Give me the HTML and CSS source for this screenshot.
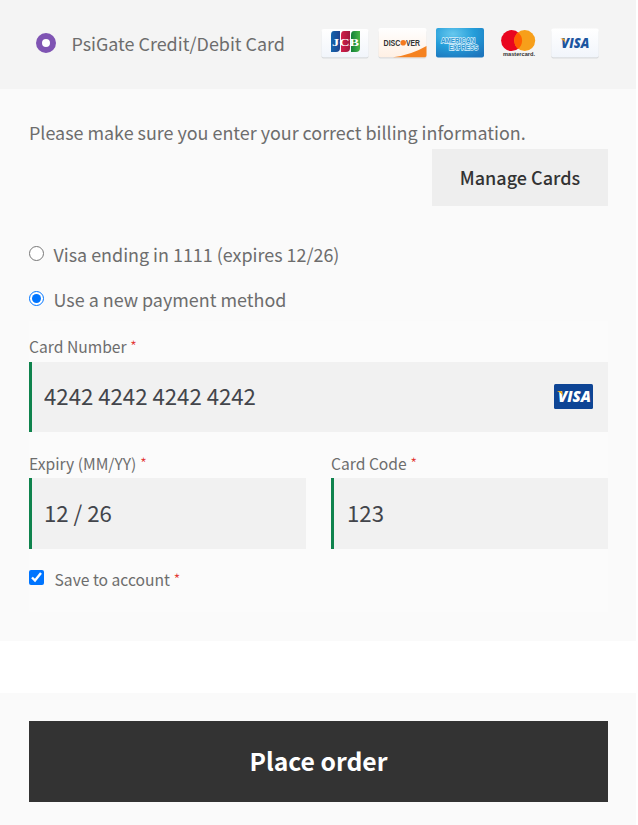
FILE: index.html
```html
<!DOCTYPE html>
<html lang="en">
<head>
<meta charset="utf-8">
<title>Checkout</title>
<link rel="stylesheet" href="styles.css">
</head>
<body>
<form class="checkout">
	<div class="method">
		<input type="radio" class="method-radio" name="gateway" id="psigate" checked>
		<label for="psigate" class="method-name">PsiGate Credit/Debit Card</label>
		<div class="cards">
			<svg width="48" height="31" viewBox="0 0 48 31">
				<defs>
					<linearGradient id="paper" x1="0" y1="0" x2="0" y2="1"><stop offset="0" stop-color="#fff"/><stop offset="1" stop-color="#f1f5fb"/></linearGradient>
					<linearGradient id="jb" x1="0" x2="1"><stop offset="0" stop-color="#1465ad"/><stop offset="1" stop-color="#1e448f"/></linearGradient>
					<linearGradient id="jr" x1="0" x2="1"><stop offset="0" stop-color="#d3204a"/><stop offset="1" stop-color="#9f173e"/></linearGradient>
					<linearGradient id="jg" x1="0" x2="1"><stop offset="0" stop-color="#128039"/><stop offset="1" stop-color="#48b547"/></linearGradient>
				</defs>
				<rect x=".5" y="2" width="47" height="28.5" rx="2" fill="#d9dbdd"/>
				<rect x=".5" y="1" width="47" height="28.3" rx="2" fill="url(#paper)"/>
				<path d="M13 3h6v17q0 4-4 4H10V7q0-4 3-4z" fill="url(#jb)"/>
				<path d="M23 3h6v17q0 4-4 4h-5V7q0-4 3-4z" fill="url(#jr)"/>
				<path d="M33 3h6v17q0 4-4 4h-5V7q0-4 3-4z" fill="url(#jg)"/>
				<text x="11" y="18" class="jcb" textLength="27" lengthAdjust="spacingAndGlyphs">JCB</text>
			</svg>
			<svg width="49" height="31" viewBox="0 0 49 31">
				<defs><linearGradient id="peach" x1="0" y1="0" x2="0" y2="1"><stop offset="0" stop-color="#fff"/><stop offset="1" stop-color="#fff0e4"/></linearGradient></defs>
				<rect x=".5" y="2" width="48" height="28.500" rx="2" fill="#d9dbdd"/>
				<rect x=".5" y="0" width="48" height="29.300" rx="2" fill="url(#peach)"/>
				<path d="M48.500 18v9.500q0 1.800-2 1.800H15Q33 27 48.500 18z" fill="#f58220"/>
				<text x="5.500" y="18" class="discover" textLength="17" lengthAdjust="spacingAndGlyphs">DISC</text>
				<circle cx="25.200" cy="14.800" r="2.800" fill="#f47a20"/>
				<text x="28" y="18" class="discover" textLength="14" lengthAdjust="spacingAndGlyphs">VER</text>
			</svg>
			<svg width="48" height="31" viewBox="0 0 48 31">
				<defs><radialGradient id="amex" cx=".35" cy=".2" r=".9"><stop offset="0" stop-color="#66c8ee"/><stop offset=".5" stop-color="#249dd9"/><stop offset="1" stop-color="#1d76bd"/></radialGradient></defs>
				<rect x="0" y="0" width="48" height="29.500" rx="2" fill="url(#amex)"/>
				<text x="5" y="15" class="amex" textLength="34" lengthAdjust="spacingAndGlyphs">AMERICAN</text>
				<text x="13" y="22" class="amex" textLength="29" lengthAdjust="spacingAndGlyphs">EXPRESS</text>
			</svg>
			<svg width="48" height="31" viewBox="0 0 48 31">
				<circle cx="17.600" cy="12.600" r="10.500" fill="#e9061f"/>
				<circle cx="30.700" cy="12.600" r="10.500" fill="#f79f1a"/>
				<path d="M24.150 4.400a10.500 10.500 0 0 1 0 16.400a10.500 10.500 0 0 1 0-16.400z" fill="#ff5f00"/>
				<text x="9" y="28.200" class="mc" textLength="32" lengthAdjust="spacingAndGlyphs">mastercard.</text>
			</svg>
			<svg width="48" height="31" viewBox="0 0 48 31">
				<rect x=".3" y="2" width="47.400" height="28.500" rx="2" fill="#d9dbdd"/>
				<rect x=".3" y=".5" width="47.400" height="28.800" rx="2" fill="url(#paper)"/>
				<text x="10.300" y="20" class="visa" textLength="28" lengthAdjust="spacingAndGlyphs">VISA</text>
				<path d="M9.300 10.500h3q1.200 0 1.500 1.200l.6 3q-1.600-2.700-5.100-4.200z" fill="#f0a11e"/>
			</svg>
		</div>
	</div>

	<div class="payment-box">
		<p class="note">Please make sure you enter your correct billing information.</p>
		<div class="manage"><a class="button">Manage Cards</a></div>
		<div class="saved first">
			<input type="radio" name="token" id="visa1111">
			<label for="visa1111">Visa ending in 1111 (expires 12/26)</label>
		</div>
		<div class="saved">
			<input type="radio" name="token" id="newcard" checked>
			<label for="newcard">Use a new payment method</label>
		</div>

		<div class="card-form">
			<div class="field">
				<label for="number">Card Number <span class="required">*</span></label>
				<div class="number-box">
					<input type="text" id="number" class="text" value="4242 4242 4242 4242">
					<svg class="brand" width="39" height="25" viewBox="0 0 39 25">
						<rect width="39" height="25" rx="1.500" fill="#0e4595"/>
						<text x="4" y="17.600" class="visa white" textLength="33" lengthAdjust="spacingAndGlyphs">VISA</text>
						<path d="M3 7h3.500q1.400 0 1.700 1.200l.7 3.600Q7 8.500 3 7z" fill="#f2ae14"/>
					</svg>
				</div>
			</div>
			<div class="row">
				<div class="field">
					<label for="expiry">Expiry (MM/YY) <span class="required">*</span></label>
					<input type="text" id="expiry" class="text" value="12 / 26">
				</div>
				<div class="field">
					<label for="cvc">Card Code <span class="required">*</span></label>
					<input type="text" id="cvc" class="text code" value="123">
				</div>
			</div>
			<div class="save">
				<input type="checkbox" id="save" checked>
				<label for="save">Save to account <span class="required">*</span></label>
			</div>
		</div>
	</div>

	<div class="place-order">
		<button type="button" class="order">Place order</button>
	</div>
</form>
</body>
</html>
```
FILE: styles.css
```css
* {
	box-sizing: border-box;
}
body {
	margin: 0;
	background: #fff;
	color: #6d6d6d;
	font-family: "Noto Sans CJK SC", "Open Sans", sans-serif;
	font-size: 17.92px;
	line-height: 30px;
}
input {
	margin: 0;
	font-family: inherit;
}
.checkout {
	width: 636px;
}

/* gateway header */
.method {
	display: flex;
	align-items: center;
	height: 89px;
	padding-left: 36px;
	background: #f4f4f4;
}
.method-radio {
	appearance: none;
	width: 20px;
	height: 20px;
	border: 6.5px solid #7f54b3;
	border-radius: 50%;
	background: #fff;
	margin-bottom: 3px;
}
.method-name {
	width: 249px;
	padding-left: 15.5px;
	padding-bottom: 4px;
	white-space: nowrap;
}
.cards {
	display: flex;
	gap: 9.2px;
	margin-bottom: 3px;
	padding-left: 16px;
}
.cards svg {
	display: block;
	flex: none;
}
svg text {
	font-family: "Liberation Sans", Arial, sans-serif;
	font-weight: bold;
}
svg .jcb {
	font-family: "Liberation Serif", serif;
	font-size: 10.5px;
	fill: #fff;
}
.discover {
	font-size: 8.5px;
	fill: #333;
}
.amex {
	font-size: 7px;
	fill: #2b96d2;
	stroke: #d5effc;
	stroke-width: 1.3px;
	paint-order: stroke;
}
.mc {
	font-size: 6px;
	fill: #333;
}
svg .visa {
	font-family: "Open Sans", sans-serif;
	font-size: 13.5px;
	font-weight: 800;
	font-style: italic;
	fill: #1b55a0;
}
svg .white {
	font-size: 15px;
	fill: #fff;
}

/* payment box */
.payment-box {
	height: 552px;
	padding: 28px 28px 0 29px;
	background: #fafafa;
}
.note {
	margin: 0;
	height: 32px;
	white-space: nowrap;
}
.manage {
	display: flex;
	justify-content: flex-end;
}
.button {
	width: 176px;
	height: 57px;
	line-height: 56px;
	background: #eee;
	color: #333;
	font-size: 18px;
	font-weight: 500;
	text-align: center;
}
.saved {
	display: flex;
	align-items: center;
	gap: 9.5px;
	height: 45px;
}
.saved input, .save input {
	width: 15px;
	height: 15px;
	margin-bottom: 4px;
}
.saved label {
	padding-bottom: 4px;
}
.first {
	margin-top: 27px;
}
.card-form {
	height: 291px;
	margin-top: -2px;
	padding-top: 10px;
	background: #fbfbfb;
}
.field label {
	display: block;
	height: 31px;
	font-size: 15.65px;
	line-height: 32px;
}
.required {
	color: #e2302c;
	font-weight: 300;
}
.text {
	display: block;
	width: 100%;
	height: 70px;
	padding: 0 12px 4px;
	border: 0;
	border-left: 3px solid #0f834d;
	border-radius: 0;
	background: #f1f1f1;
	color: #43454b;
	font-size: 22.2px;
}
.number-box {
	position: relative;
}
.brand {
	position: absolute;
	top: 22px;
	right: 15px;
}
.row {
	display: grid;
	grid-template-columns: 1fr 1fr;
	gap: 25px;
	margin-top: 16px;
}
.row .text {
	height: 71px;
	margin-top: -1px;
	padding-bottom: 3px;
}
.row .code {
	padding-left: 13px;
}
.save {
	display: flex;
	align-items: center;
	gap: 10.5px;
	height: 30px;
	margin-top: 15px;
	font-size: 15.65px;
}
.save label {
	padding-top: 2px;
}

.place-order {
	height: 132px;
	margin-top: 52px;
	padding: 28px 28px 0 29px;
	background: #fafafa;
}
.order {
	display: block;
	width: 100%;
	height: 81px;
	padding: 0 0 4px;
	border: 0;
	background: #333;
	color: #fff;
	font-family: inherit;
	font-size: 24.7px;
	font-weight: 700;
}
```
